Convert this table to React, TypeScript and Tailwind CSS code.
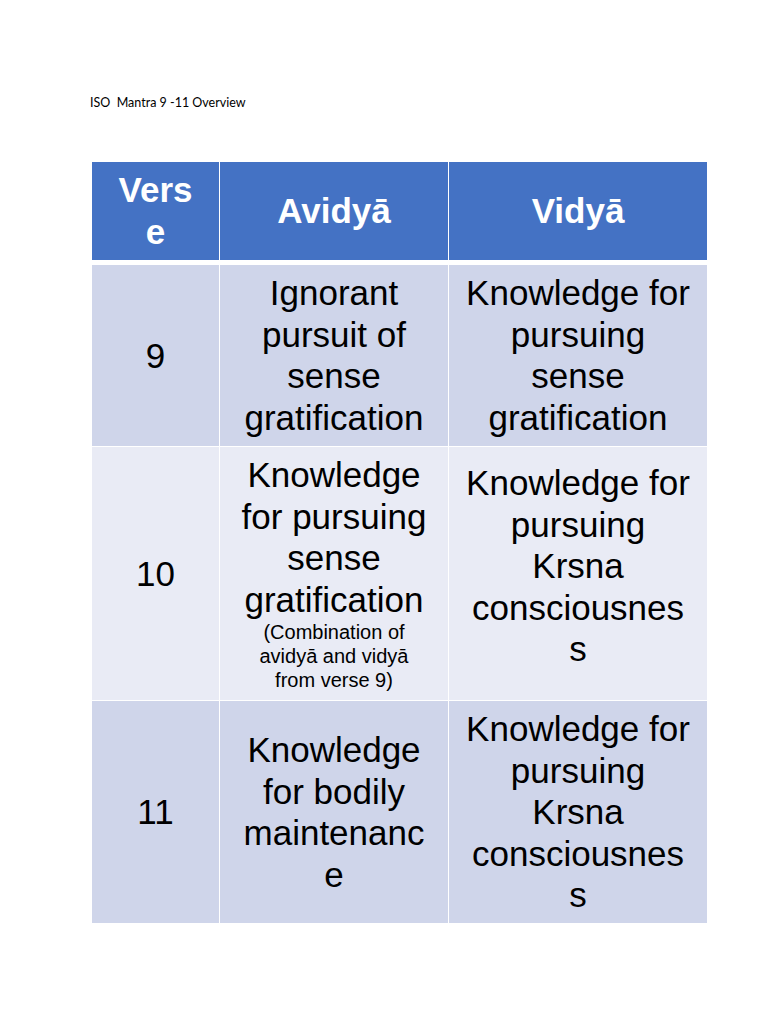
const rows = [
  {
    verse: "9",
    avidya: "Ignorant pursuit of sense gratification",
    note: "",
    vidya: "Knowledge for pursuing sense gratification",
    bg: "bg-[#cfd5ea]",
    vidyaPad: "",
  },
  {
    verse: "10",
    avidya: "Knowledge for pursuing sense gratification",
    note: "(Combination of avidyā and vidyā from verse 9)",
    vidya: "Knowledge for pursuing Krsna consciousness",
    bg: "bg-[#e9ebf5]",
    vidyaPad: "pb-[22px]",
  },
  {
    verse: "11",
    avidya: "Knowledge for bodily maintenance",
    note: "",
    vidya: "Knowledge for pursuing Krsna consciousness",
    bg: "bg-[#cfd5ea]",
    vidyaPad: "",
  },
];

const cell =
  "flex flex-col items-center justify-center text-center px-4 py-[7.5px] [overflow-wrap:anywhere]";

export default function App() {
  return (
    <div className="min-h-screen w-[768px] bg-white">
      <div className="pl-[90px] pt-[94px]">
        <p className="whitespace-pre text-[12.5px] text-black font-['Lato','Liberation_Sans',sans-serif]">
          ISO  Mantra 9 -11 Overview
        </p>
      </div>

      <div className="ml-[92px] mt-[49px] w-[615px] font-['Liberation_Sans',Arial,sans-serif] text-[35px] leading-[41.5px] text-black">
        {/* header */}
        <div className="grid grid-cols-[127px_228px_258px] gap-x-px mb-[5px]">
          <div className={`${cell} !px-[18px] h-[98px] bg-[#4472c4] font-bold text-white`}>Verse</div>
          <div className={`${cell} h-[98px] bg-[#4472c4] font-bold text-white`}>Avidyā</div>
          <div className={`${cell} h-[98px] bg-[#4472c4] font-bold text-white`}>Vidyā</div>
        </div>

        <div className="flex flex-col gap-y-px">
          {rows.map((r) => (
            <div key={r.verse} className="grid grid-cols-[127px_228px_258px] gap-x-px">
              <div className={`${cell} ${r.bg}`}>{r.verse}</div>
              <div className={`${cell} ${r.bg}`}>
                <span>{r.avidya}</span>
                {r.note && (
                  <span className="px-[10px] text-[20px] leading-[24px]">{r.note}</span>
                )}
              </div>
              <div className={`${cell} ${r.bg} ${r.vidyaPad}`}>{r.vidya}</div>
            </div>
          ))}
        </div>
      </div>
    </div>
  );
}
